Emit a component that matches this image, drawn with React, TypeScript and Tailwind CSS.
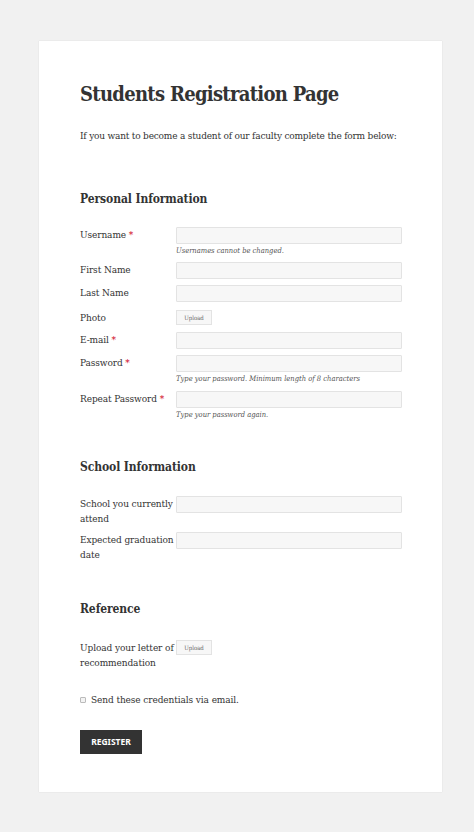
import React from 'react';

const serif = { fontFamily: '"DejaVu Serif Condensed", "Liberation Serif", serif' };

function Req() {
  return <span className="text-[#d0021b]"> *</span>;
}

function TextField({ help }: { help?: string }) {
  return (
    <div className="flex flex-col">
      <div className="h-[17px] w-[226px] border border-[#e3e3e3] bg-[#f7f7f7] rounded-[1px]" />
      {help && <p className="mt-[1px] text-[7.5px] italic leading-[11px] text-[#555]">{help}</p>}
    </div>
  );
}

function UploadButton() {
  return (
    <div className="flex h-[15px] w-[36px] items-center justify-center border border-[#e3e3e3] bg-[#f7f7f7] text-[6px] text-[#666]">
      Upload
    </div>
  );
}

function Row({ label, children, className = '' }: { label: React.ReactNode; children: React.ReactNode; className?: string }) {
  return (
    <div className={`flex items-start ${className}`}>
      <div className="w-[96px] shrink-0 pr-[2px] text-[10px] leading-[15px] tracking-[-0.1px] text-[#333]">{label}</div>
      {children}
    </div>
  );
}

function SectionTitle({ children, className = '' }: { children: React.ReactNode; className?: string }) {
  return <h2 className={`text-[12px] font-bold leading-[16px] tracking-[-0.1px] text-[#333] ${className}`}>{children}</h2>;
}

export default function App() {
  return (
    <div className="min-h-[832px] bg-[#f1f1f1] pt-[41px] pb-[40px]" style={serif}>
      <div className="ml-[39px] w-[403px] bg-white pl-[41px] pr-[41px] pt-[40px] pb-[38px] shadow-[0_0_1px_rgba(0,0,0,0.15)]">
        <h1 className="text-[20px] font-bold leading-[26px] tracking-[-0.7px] text-[#333]">Students Registration Page</h1>
        <p className="mt-[21px] whitespace-nowrap text-[10px] leading-[15px] tracking-[-0.2px] text-[#333]">
          If you want to become a student of our faculty complete the form below:
        </p>

        <SectionTitle className="mt-[48px]">Personal Information</SectionTitle>

        <div className="mt-[20px] flex flex-col">
          <Row label={<>Username<Req /></>}>
            <TextField help="Usernames cannot be changed." />
          </Row>
          <Row label="First Name" className="mt-[6px]">
            <TextField />
          </Row>
          <Row label="Last Name" className="mt-[6px]">
            <TextField />
          </Row>
          <Row label="Photo" className="mt-[8px]">
            <UploadButton />
          </Row>
          <Row label={<>E-mail<Req /></>} className="mt-[7px]">
            <TextField />
          </Row>
          <Row label={<>Password<Req /></>} className="mt-[6px]">
            <TextField help="Type your password. Minimum length of 8 characters" />
          </Row>
          <Row label={<>Repeat Password<Req /></>} className="mt-[7px]">
            <TextField help="Type your password again." />
          </Row>
        </div>

        <SectionTitle className="mt-[39px]">School Information</SectionTitle>

        <div className="mt-[21px] flex flex-col">
          <Row label="School you currently attend">
            <TextField />
          </Row>
          <Row label="Expected graduation date" className="mt-[6px]">
            <TextField />
          </Row>
        </div>

        <SectionTitle className="mt-[39px]">Reference</SectionTitle>

        <div className="mt-[23px]">
          <Row label="Upload your letter of recommendation">
            <UploadButton />
          </Row>
        </div>

        <label className="mt-[22px] flex items-center gap-[5px] text-[10px] leading-[15px] tracking-[-0.1px] text-[#333]">
          <span className="inline-block h-[6px] w-[6px] rounded-[1px] border border-[#bbb] bg-[#f3f3f3]" />
          Send these credentials via email.
        </label>

        <button
          className="mt-[23px] h-[24px] w-[62px] bg-[#333] text-[8.5px] font-bold uppercase text-white"
          style={{ fontFamily: '"Noto Sans", "Open Sans", sans-serif' }}
        >
          Register
        </button>
      </div>
    </div>
  );
}
